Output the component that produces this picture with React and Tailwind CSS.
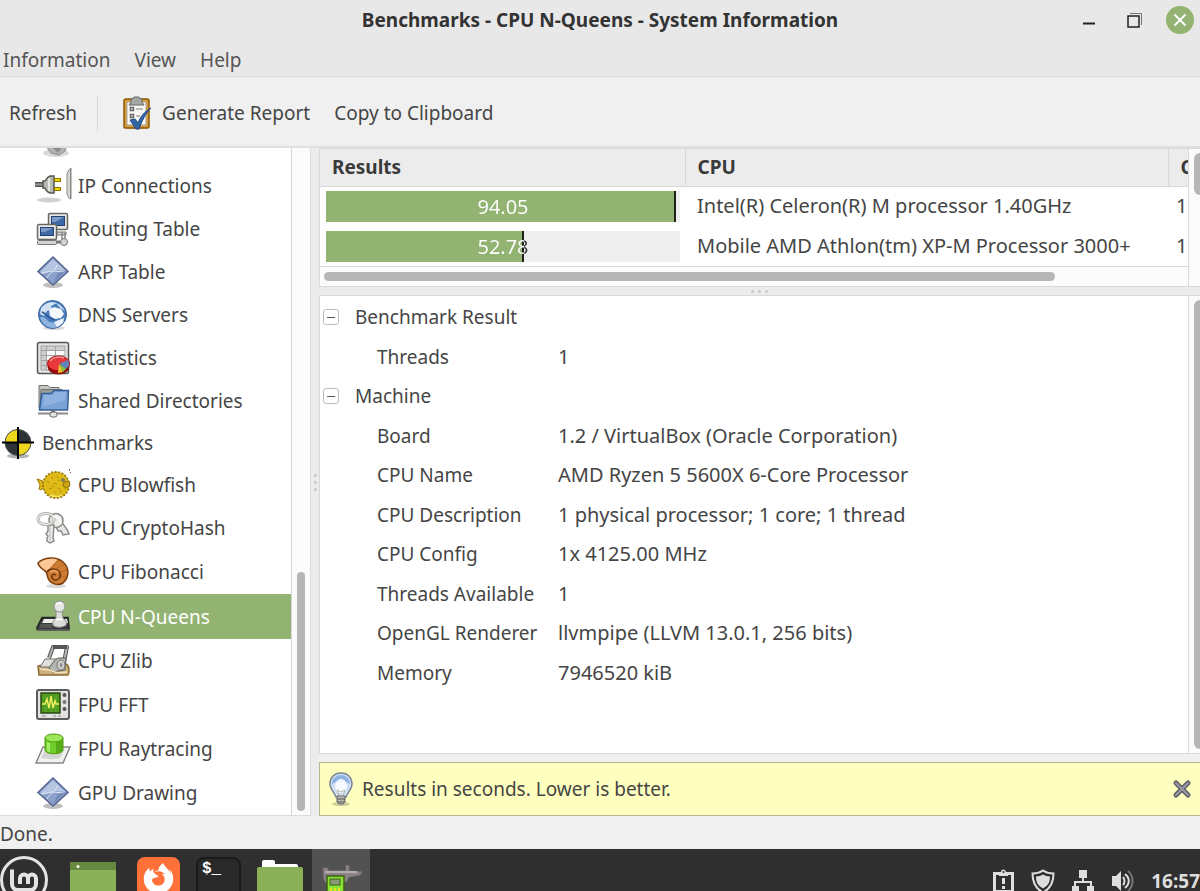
import React from 'react'
import { FaFirefoxBrowser } from 'react-icons/fa'

function Icon({ children, className = 'w-[34px] h-[34px]', viewBox = '0 0 34 34' }) {
  return (
    <svg className={`shrink-0 overflow-visible ${className}`} viewBox={viewBox} fill="none" aria-hidden="true">
      {children}
    </svg>
  )
}

const Globe = () => (
  <Icon>
    <ellipse cx="18" cy="30" rx="11" ry="2" fill="#000" opacity=".15" />
    <circle cx="16.500" cy="16.500" r="14" fill="#4a7bbb" stroke="#3a64a0" />
    <path d="M5 10c3-4 7-6 11-6l5 1-6 3 1 3-5 2-3 5-4-2z" fill="#d3e2f3" />
    <path d="M4 19c5 0 7 2 9 5l7 1 8-3c-2 5-6 8-11 8-6 0-11-4-13-11z" fill="#8fb4de" />
    <path d="M13 12l5-3 7 2 3 5-3 4-6 1-5-3z" fill="#f4f8fc" />
    <path d="M18 24l10-4-1 5-6 4z" fill="#eef4fb" />
    <path d="M20 5c4 1 7 4 9 8l-5-3z" fill="#c3d8ef" />
    <path d="M6 14c5 2 6 7 13 8" stroke="#2c5797" strokeWidth="1.500" />
  </Icon>
)

// Bottom of the row that is scrolled out above the list
const Adapter = () => (
  <Icon>
    <ellipse cx="20" cy="29" rx="13" ry="4" fill="#000" opacity=".15" />
    <path d="M7 18h25l-3 9-6 4-8-2z" fill="#b4b5b2" stroke="#8a8c88" />
    <path d="M15 22h12l-5 7z" fill="#8a8c88" />
  </Icon>
)

const Plug = () => (
  <Icon>
    <ellipse cx="13" cy="31" rx="12" ry="2.500" fill="#000" opacity=".18" />
    <path d="M-1 15.500h12" stroke="#555" strokeWidth="5" />
    <path d="M-1 15.500h12" stroke="#9a9a94" strokeWidth="2" />
    <path d="M18 7v17h-4c-3-1-5-4-5-5h-2v-7h2c1-2 3-4 5-5z" fill="#b9bab4" stroke="#555753" strokeWidth="1.500" />
    <path d="M13 9v13" stroke="#e6e6e2" strokeWidth="2" />
    <rect x="18.500" y="9.500" width="6" height="3" fill="#edd400" stroke="#8a7a00" />
    <rect x="18.500" y="18.500" width="6" height="3" fill="#edd400" stroke="#8a7a00" />
    <path d="M35-1v31l-2-1-2-4V5l2-4z" fill="#d8d8d5" stroke="#888a85" />
    <path d="M34.500 0v29" stroke="#888a85" />
  </Icon>
)

const Network = () => (
  <Icon>
    <rect x="12.500" y="1.500" width="19" height="16" rx="1.500" fill="#e6e6e2" stroke="#666864" strokeWidth="1.500" />
    <rect x="15.500" y="4.500" width="13" height="9" fill="#3e68a8" stroke="#23406f" />
    <path d="M16 5h12l-9 5h-3z" fill="#7c9bc9" />
    <path d="M16 20h14v3H16z" fill="#c9cac6" stroke="#777" />
    <path d="M26 20v8M29 21v8" stroke="#888" strokeWidth="1.500" />
    <rect x="1.500" y="12.500" width="19" height="15" rx="1.500" fill="#eeeeec" stroke="#666864" strokeWidth="1.500" />
    <rect x="4.500" y="15.500" width="13" height="8" fill="#3e68a8" stroke="#23406f" />
    <path d="M5 16h12l-8 4H5z" fill="#7c9bc9" />
    <rect x="1.500" y="28.500" width="19" height="4" rx="1" fill="#d3d4d0" stroke="#777" />
    <path d="M20 30h6" stroke="#777" strokeWidth="3" />
    <circle cx="28" cy="30" r="3.500" fill="#d3d4d0" stroke="#777" />
  </Icon>
)

const Diamond = () => (
  <Icon>
    <ellipse cx="17" cy="30" rx="10" ry="3" fill="#000" opacity=".25" />
    <path d="M17 2l15 14.500L17 30 2 16.500z" fill="#8ba0ca" stroke="#53648f" strokeWidth="1.500" />
    <path d="M17 4l13 12-11-1-13 4-2-2z" fill="#b6c5e2" />
    <path d="M11 23c3-7 8-5 10-13M6 18l10-2 12 1" stroke="#dfe7f5" strokeWidth="1" />
    <path d="M17 28l13-12-8 2-3 6z" fill="#6d83b1" opacity=".7" />
  </Icon>
)

const Stats = () => (
  <Icon>
    <rect x="1.500" y="1.500" width="31" height="31" rx="2" fill="#e4e4e2" stroke="#555" strokeWidth="1.500" />
    <path d="M5 5h24v24H5z" fill="#fafafa" />
    <path d="M5 5h24v4H5zM5 5h5v24H5z" fill="#cfcfcd" />
    <path d="M5 9.500h24M5 14.500h24M5 19.500h24M5 24.500h24M10.500 5v24M19.500 5v24M5 5h24v24H5z" stroke="#a2a2a0" />
    <ellipse cx="22.500" cy="25.500" rx="11" ry="8" fill="#8f1010" />
    <ellipse cx="22.500" cy="22.500" rx="11" ry="7.500" fill="#e9383b" stroke="#a40000" />
    <path d="M23 23l9-4c2 3 1 7-2 9z" fill="#5d86bd" />
    <path d="M23 23l7 5-3 3z" fill="#7dc142" />
    <path d="M23 23l4 8-5 1z" fill="#edc32a" />
    <path d="M14 20c3-4 9-5 14-3" stroke="#f79092" strokeWidth="1.500" />
  </Icon>
)

const SharedFolder = () => (
  <Icon>
    <path d="M3 1.500h9l2 2h9v4H5v18l-2-1z" fill="#c4c5c1" stroke="#70726e" />
    <path d="M5 5.500h21v4H6v15H4z" fill="#9b9d99" stroke="#70726e" />
    <path d="M6 9.500h9l3-3h14.500L31.500 26H3.500z" fill="#7aa3d6" stroke="#37609a" strokeWidth="1.500" />
    <path d="M8 11h9l3-3h10l-1 8-22 7z" fill="#9cbde6" opacity=".6" />
    <path d="M2 29.500h30" stroke="#8a8c88" strokeWidth="2" />
    <path d="M17 26v3" stroke="#70726e" strokeWidth="4" />
    <rect x="14" y="28" width="7" height="5" rx="2" fill="#e4e4e2" stroke="#666" />
  </Icon>
)

const Target = () => (
  <Icon>
    <ellipse cx="18" cy="30" rx="11" ry="2.500" fill="#000" opacity=".3" />
    <circle cx="18" cy="16.500" r="13" fill="#2e3436" />
    <path d="M18 16.500V3.500a13 13 0 0 0-13 13z" fill="#edd71f" />
    <path d="M18 16.500v13a13 13 0 0 0 13-13z" fill="#edd71f" />
    <circle cx="18" cy="16.500" r="13" stroke="#555" />
    <path d="M18 1v32M2 16.500h32" stroke="#000" strokeWidth="2" />
  </Icon>
)

const Blowfish = () => (
  <Icon>
    <path d="M1 11l6 2 2 5-4 4-2-1 1-4z" fill="#e0b71a" stroke="#9a7a08" />
    <circle cx="20" cy="17" r="13" fill="#dcb613" stroke="#9a7a08" strokeWidth="2" strokeDasharray="2 1.500" />
    <circle cx="20" cy="17" r="12" fill="#e0bb18" />
    <path d="M11 13l2 2M15 9l2 2M21 8l1 2M13 21l3-1M18 25l2-2M24 25l1-3M18 15l3 1M16 18l2 1M22 20l2 1M22 13l2-1M28 21l2-1" stroke="#b08f0e" />
    <path d="M28 14l5-1 1 4-3 3-4-2z" fill="#cfa714" stroke="#8a6b05" />
    <circle cx="27" cy="12" r="2" fill="#7a7a5c" />
    <path d="M14 27c5 2 9 2 12 0" stroke="#f3df75" strokeWidth="1.500" />
    <path d="M33.500 1v2M34.500 4v1" stroke="#777" />
  </Icon>
)

const Keys = () => (
  <Icon>
    <path d="M19 13l6-3 7 10 1 3-6 1-2-4-3 0z" fill="#e6e6e4" stroke="#8a8c88" strokeWidth="1.500" />
    <circle cx="20" cy="9.500" r="7" fill="#ededeb" stroke="#8a8c88" strokeWidth="1.500" />
    <path d="M12 14h6l-1 13 1 3-4 2-3-2v-3l1-2-2-2 2-3z" fill="#eeeeec" stroke="#8a8c88" strokeWidth="1.500" />
    <path d="M14 15v15" stroke="#b4b6b2" />
    <ellipse cx="10" cy="8" rx="8" ry="5.500" stroke="#a2a49f" strokeWidth="3" />
    <ellipse cx="10" cy="8" rx="8" ry="5.500" stroke="#e8e8e6" strokeWidth="1.500" />
    <path d="M17 5l6 2 2 6" stroke="#fff" strokeWidth="1.500" />
  </Icon>
)

const Shell = () => (
  <Icon>
    <ellipse cx="20" cy="31" rx="10" ry="2" fill="#000" opacity=".15" />
    <path d="M2 8C8 2 20 1 27 7c7 6 6 16 0 21-5 3-13 1-15-5-1-3-1-5-2-6C8 14 3 13 2 8z" fill="#cf7d35" stroke="#7a3d0f" strokeWidth="1.500" />
    <path d="M3 8C9 3 18 3 22 5c-4 3-9 9-11 11C8 14 4 12 3 8z" fill="#fbc796" />
    <path d="M22 5l-7 9M27 9l-8 6M31 15l-9 3M30 23l-8-3" stroke="#b5682a" />
    <path d="M11 17c3-4 11-4 13 1s-4 9-7 6 0-6 3-4" stroke="#6b340b" strokeWidth="1.500" />
    <path d="M14 17c3-2 7-2 8 1" stroke="#f2ab6c" strokeWidth="1.500" />
  </Icon>
)

const Pawn = () => (
  <Icon>
    <path d="M6 17.500h26l1 10v2H1v-2z" fill="#3a3c3b" stroke="#252626" strokeWidth="1.500" />
    <path d="M8 19h11l-1 4H6z" fill="#eeeeec" />
    <path d="M5 24h12l-1 4H3z" fill="#555756" />
    <path d="M24 19h7l1 4h-7z" fill="#e4e4e2" />
    <path d="M1 29h32v2H1z" fill="#5a5c5b" />
    <path d="M20 11h6l1 7c3 3 4 5 3 7-3 3-11 3-13 0-1-3 1-5 3-7z" fill="#dcdddb" stroke="#8a8c88" />
    <circle cx="23.500" cy="6.500" r="5.500" fill="#e4e5e3" stroke="#8a8c88" />
    <path d="M20 5c1-2 4-3 6-1M20 20c2-1 4-1 6 0" stroke="#fff" strokeWidth="1.500" />
  </Icon>
)

const Clamp = () => (
  <Icon>
    <path d="M2 22c3-2 5 1 9 0s5 1 9 0l10-2c3 1 4 7 2 11H3z" fill="#cdb07c" stroke="#8a6a33" strokeWidth="1.500" />
    <path d="M13 14L17 3h14l-3 15" stroke="#555753" strokeWidth="4" strokeLinejoin="round" />
    <path d="M13 14L17 3h14l-3 15" stroke="#b4b6b2" strokeWidth="2" strokeLinejoin="round" />
    <path d="M17 1h14v4H17z" fill="#555753" />
    <path d="M9 15h14l-6 8H4z" fill="#dededb" stroke="#70726e" />
    <path d="M22 14h8l-1 12-13 2-3-4 5-7z" fill="#b4b6b2" stroke="#5f615d" />
    <ellipse cx="25" cy="21" rx="4" ry="5" fill="#cfd0cc" stroke="#70726e" />
    <ellipse cx="25" cy="21" rx="1.500" ry="2" fill="#8a8c88" />
    <path d="M4 25l9 1 9 3 9-1" stroke="#f1e2bf" strokeWidth="1.500" />
  </Icon>
)

const Scope = () => (
  <Icon>
    <rect x="1" y="2" width="32" height="29" rx="2" fill="#e2e3e0" stroke="#5b5d5a" strokeWidth="2" />
    <rect x="5" y="5" width="19" height="20" fill="#4e9a1c" stroke="#2d4a12" strokeWidth="1.500" />
    <path d="M10 6v18M15 6v18M20 6v18M6 10h17M6 15h17M6 20h17" stroke="#5fa82c" />
    <path d="M6 16h3l2-5 2 9 2-12 2 12 2-7 1 3h3" stroke="#f0f060" strokeWidth="1.500" />
    <circle cx="28.500" cy="7" r="2" fill="#555" />
    <circle cx="28.500" cy="14" r="2" fill="#777" />
    <circle cx="28.500" cy="21" r="2" fill="#555" />
    <path d="M6 28h4M17 28h3M22 28h3" stroke="#aaa" strokeWidth="1.500" />
  </Icon>
)

const Cylinder = () => (
  <Icon>
    <path d="M7 15h27l-7 16H0z" fill="#f2f2f0" stroke="#888a85" strokeWidth="1.500" />
    <path d="M9 17h20l-5 9c-6 2-13 1-19 0z" fill="#d5d6d3" />
    <path d="M9 6v12c1 5 17 5 18 0V6z" fill="#6fd02c" stroke="#4e9a06" />
    <path d="M20 10v11c4 0 6-1 7-3V7z" fill="#53ab17" />
    <path d="M11 10v9l3 1v-9z" fill="#a5ec6b" />
    <ellipse cx="18" cy="6" rx="9" ry="4" fill="#9be65a" stroke="#4e9a06" />
  </Icon>
)

const Clipboard = () => (
  <Icon>
    <ellipse cx="16" cy="32" rx="14" ry="1.500" fill="#000" opacity=".15" />
    <rect x="4" y="3" width="25" height="29" rx="2" fill="#d79a3c" stroke="#8f5902" strokeWidth="1.500" />
    <path d="M7 6h19v23H7z" fill="#f7f7f5" stroke="#a9a9a5" />
    <path d="M11 6V3l3-1V1h5v1l3 1v3l2 3H9z" fill="#a5a7a2" stroke="#666864" />
    <path d="M10.500 11.500h3v3h-3zM10.500 18.500h3v3h-3z" stroke="#666" strokeWidth="1.500" />
    <path d="M16 13h7M16 20h4" stroke="#a9a9a5" strokeWidth="1.500" />
    <path d="M10 24l5-1 3 4c3-7 6-11 13-15-6 6-9 13-12 21h-3z" fill="#3465a4" stroke="#204a87" />
  </Icon>
)

const Bulb = () => (
  <Icon className="w-[26px] h-[34px]" viewBox="0 0 26 34">
    <ellipse cx="13" cy="32" rx="9" ry="2" fill="#000" opacity=".2" />
    <path d="M13 1C6 1 2 6 2 12c0 5 4 8 6 13h10c2-5 6-8 6-13 0-6-4-11-11-11z" fill="#cfe0f4" stroke="#7c8794" strokeWidth="1.500" />
    <path d="M13 3C8 3 4 7 4 12c5-3 13-3 18 0 0-5-4-9-9-9z" fill="#8fb3e3" />
    <ellipse cx="13" cy="14" rx="6" ry="7" fill="#fff" opacity=".85" />
    <path d="M11 24l-2-6 4 2 4-2-2 6" stroke="#b5b5a5" />
    <path d="M9 24h8v6l-2 2h-4l-2-2z" fill="#b9bab0" stroke="#666" />
    <path d="M9 27h8M9 30h8" stroke="#555" />
  </Icon>
)

const MintLogo = () => (
  <Icon className="w-12 h-12" viewBox="0 0 48 48">
    <circle cx="24" cy="24" r="22.500" stroke="#e4e4e4" strokeWidth="3" />
    <path
      d="M12 13.500v14.500a6 6 0 0 0 6 6h12a6 6 0 0 0 6-6v-5.500a4 4 0 0 0-8 0V28M28 28v-5.500a4 4 0 0 0-8 0V28"
      stroke="#e4e4e4"
      strokeWidth="4"
    />
  </Icon>
)

const Caliper = () => (
  <Icon className="w-11 h-11" viewBox="0 0 44 44">
    <path d="M4 9h5v3h18V6l3 1v5l13 1-2 3-11 2-3 5-4-2v-2H9v7l-4-5z" fill="#8d8488" stroke="#7a7175" />
    <path d="M6 12h32v2H6z" fill="#b5acb0" />
    <rect x="8" y="17" width="17" height="25" fill="#8ae234" stroke="#3b5e10" strokeWidth="1.500" />
    <rect x="11" y="20" width="10" height="6" fill="#8a9a78" stroke="#3b5e10" />
    <path d="M12 29v10M16 29v10M20 29v10M10 33h14" stroke="#e8e020" strokeWidth="2" />
  </Icon>
)

const networkItems = [
  { label: 'IP Connections', icon: Plug },
  { label: 'Routing Table', icon: Network },
  { label: 'ARP Table', icon: Diamond },
  { label: 'DNS Servers', icon: Globe },
  { label: 'Statistics', icon: Stats },
  { label: 'Shared Directories', icon: SharedFolder },
]

const benchmarkItems = [
  { label: 'CPU Blowfish', icon: Blowfish, height: 'h-[42px]' },
  { label: 'CPU CryptoHash', icon: Keys, height: 'h-11' },
  { label: 'CPU Fibonacci', icon: Shell, height: 'h-11' },
  { label: 'CPU N-Queens', icon: Pawn, height: 'h-[45px]', selected: true },
  { label: 'CPU Zlib', icon: Clamp, height: 'h-11' },
  { label: 'FPU FFT', icon: Scope, height: 'h-11' },
  { label: 'FPU Raytracing', icon: Cylinder, height: 'h-11' },
  { label: 'GPU Drawing', icon: Diamond, height: 'h-11' },
]

const results = [
  { value: '94.05', pct: 99, cpu: 'Intel(R) Celeron(R) M processor 1.40GHz', config: '1' },
  { value: '52.78', pct: 56, cpu: 'Mobile AMD Athlon(tm) XP-M Processor 3000+', config: '1' },
]

const details = [
  { group: 'Benchmark Result' },
  { name: 'Threads', value: '1' },
  { group: 'Machine' },
  { name: 'Board', value: '1.2 / VirtualBox (Oracle Corporation)' },
  { name: 'CPU Name', value: 'AMD Ryzen 5 5600X 6-Core Processor' },
  { name: 'CPU Description', value: '1 physical processor; 1 core; 1 thread' },
  { name: 'CPU Config', value: '1x 4125.00 MHz' },
  { name: 'Threads Available', value: '1' },
  { name: 'OpenGL Renderer', value: 'llvmpipe (LLVM 13.0.1, 256 bits)' },
  { name: 'Memory', value: '7946520 kiB' },
]

function TreeItem({ label, icon: Glyph, height, selected, nested }) {
  return (
    <li className="shrink-0">
      <button
        className={`flex w-full items-center gap-2 text-left whitespace-nowrap ${height} ${nested ? 'pl-9' : ''} ${
          selected ? 'bg-[#92b372] text-white' : ''
        }`}
      >
        <Glyph />
        {label}
      </button>
    </li>
  )
}

function Sidebar() {
  return (
    <nav className="flex w-[311px] shrink-0 border-r border-b border-[#dcdcdc] bg-white">
      {/* Tree, scrolled to its end */}
      <ul className="flex min-w-0 flex-1 flex-col justify-end overflow-hidden">
        <li className="shrink-0 pb-[6px] pl-9"><Adapter /></li>
        {networkItems.map(item => (
          <TreeItem key={item.label} {...item} height="h-[43px]" nested />
        ))}
        <TreeItem label="Benchmarks" icon={Target} height="h-[42px]" />
        {benchmarkItems.map(item => (
          <TreeItem key={item.label} {...item} nested />
        ))}
      </ul>
      <div className="flex w-[19px] flex-col justify-end border-l border-[#d6d6d6] bg-[#fbfbfb] px-[5px] pb-1">
        <div className="h-[36%] rounded-full bg-[#b6b6b6]" />
      </div>
    </nav>
  )
}

function ResultBar({ value, pct }) {
  return (
    <div className="relative h-[31px] bg-[#efefef]">
      <div className="absolute inset-y-0 left-0 border-r-2 border-[#1d2416] bg-[#92b372]" style={{ width: `${pct}%` }} />
      <div
        className="relative bg-clip-text text-center leading-[31px] text-transparent"
        style={{ backgroundImage: `linear-gradient(90deg, #fff ${pct}%, #3c3c3c ${pct}%)` }}
      >
        {value}
      </div>
    </div>
  )
}

function ResultsPane() {
  return (
    <section className="flex border-y border-l border-[#d9d9d9] bg-white">
      <div className="min-w-0 flex-1">
        <div className="overflow-hidden">
          <table className="w-full min-w-[1000px] table-fixed border-collapse text-left whitespace-nowrap">
            <thead className="h-[37px] border-b border-[#d9d9d9] bg-[#ececec] text-[#3a3a3a]">
              <tr>
                <th className="w-[365px] border-r border-[#d9d9d9] pl-3 font-bold">Results</th>
                <th className="w-[483px] border-r border-[#d9d9d9] pl-3 font-bold">CPU</th>
                <th className="pl-3 font-bold">Config</th>
              </tr>
            </thead>
            <tbody className="text-xl leading-6">
              {results.map(r => (
                <tr key={r.value} className="h-10">
                  <td className="pr-[5px] pl-[6px]"><ResultBar value={r.value} pct={r.pct} /></td>
                  <td className="pl-3">{r.cpu}</td>
                  <td className="pl-2">{r.config}</td>
                </tr>
              ))}
            </tbody>
          </table>
        </div>
        <div className="border-t border-[#d9d9d9] bg-[#fbfbfb] px-1 py-[5px]">
          <div className="h-[9px] w-[85%] rounded-full bg-[#b6b6b6]" />
        </div>
      </div>
      <div className="w-3 shrink-0 border-l border-[#d9d9d9] bg-[#fbfbfb] pt-1 pl-[5px]">
        <div className="h-[42px] rounded-l-full bg-[#b6b6b6]" />
      </div>
    </section>
  )
}

function DetailsPane() {
  return (
    <section className="flex min-h-0 flex-1 border-y border-l border-[#d9d9d9] bg-white">
      <div className="min-w-0 flex-1 overflow-hidden pt-px">
        <table className="w-full table-fixed border-collapse text-left whitespace-nowrap">
          <colgroup>
            <col className="w-[238px]" />
            <col />
          </colgroup>
          <tbody>
            {details.map(row =>
              row.group ? (
                <tr key={row.group} className="odd:h-10 even:h-[39px]">
                  <th colSpan={2} className="p-0 font-normal">
                    <div className="flex items-center gap-4 pl-[3px]">
                      <button
                        aria-label={`Collapse ${row.group}`}
                        className="flex size-4 items-center justify-center rounded-[3px] border border-[#bdbdbd] bg-white"
                      >
                        <span className="h-px w-2 bg-[#555]" />
                      </button>
                      {row.group}
                    </div>
                  </th>
                </tr>
              ) : (
                <tr key={row.name} className="odd:h-10 even:h-[39px]">
                  <th className="p-0 pl-[57px] font-normal">{row.name}</th>
                  <td className="p-0 text-xl leading-6">{row.value}</td>
                </tr>
              )
            )}
          </tbody>
        </table>
      </div>
      <div className="w-3 shrink-0 border-l border-[#d9d9d9] bg-[#fbfbfb] pt-1 pb-1 pl-[5px]">
        <div className="h-full rounded-l-full bg-[#b6b6b6]" />
      </div>
    </section>
  )
}

function Taskbar() {
  return (
    <footer className="flex h-[42px] shrink-0 items-start justify-between overflow-hidden bg-[#2f2f2f]">
      <div className="flex items-start">
        <button aria-label="Menu" className="pt-[7px]"><MintLogo /></button>
        <button aria-label="Show desktop" className="ml-[22px] pt-[13px]">
          <Icon className="w-[46px] h-9" viewBox="0 0 46 36">
            <rect width="46" height="40" rx="1" fill="#8ab158" />
            <path d="M0 0h46v8H0z" fill="#66893f" />
            <circle cx="8" cy="4.500" r="1.500" fill="#fff" />
          </Icon>
        </button>
        <button aria-label="Firefox" className="ml-[21px] pt-2">
          <span className="flex h-11 w-[43px] items-start justify-center rounded-lg bg-[#ff7139] pt-[6px] text-white">
            <FaFirefoxBrowser size={31} />
          </span>
        </button>
        <button aria-label="Terminal" className="ml-4 pt-2">
          <span className="block h-11 w-[45px] rounded-lg border-2 border-[#1a1a1a] bg-[#292929] pl-1 text-left font-['Liberation_Mono'] text-base leading-5 font-bold text-white">
            $_
          </span>
        </button>
        <button aria-label="Files" className="ml-4 pt-[11px]">
          <Icon className="w-[46px] h-10" viewBox="0 0 46 40">
            <path d="M5 9V2q0-2 2-2h9q2 0 2 2v2h21q2 0 2 2v3z" fill="#fff" />
            <rect y="7" width="46" height="40" rx="2" fill="#8ab158" />
          </Icon>
        </button>
        <button aria-label="System Information" className="ml-[9px] flex h-[42px] w-[58px] justify-center bg-[#525252] pt-[10px]">
          <Caliper />
        </button>
      </div>
      <div className="flex items-start gap-4 pt-5 text-[#dedede]">
        <Icon className="w-[23px] h-6" viewBox="0 0 23 24">
          <path d="M7 4.500H2.500v18h18v-18H16" stroke="currentColor" strokeWidth="3" />
          <path d="M7 3h2a2.500 2.500 0 0 1 5 0h2v4H7z" fill="currentColor" />
          <circle cx="11.500" cy="3" r="1" fill="#2f2f2f" />
          <path d="M11.500 9v6M11.500 17v3" stroke="currentColor" strokeWidth="3" />
        </Icon>
        <Icon className="w-6 h-6" viewBox="0 0 24 24">
          <path d="M12 1.500c3 2 6 3 10.500 3 0 9-3 15-10.500 19C4.500 19.500 1.500 13.500 1.500 4.500 6 4.500 9 3.500 12 1.500z" stroke="currentColor" strokeWidth="2" />
          <path d="M12 5.500c2 1 4 2 7 2 0 6-2 9-7 12-5-3-7-6-7-12 3 0 5-1 7-2z" fill="currentColor" />
        </Icon>
        <Icon className="w-6 h-6" viewBox="0 0 24 24">
          <path d="M8 1h8v8H8zM1 17h7v7H1zM16 17h7v7h-7z" fill="currentColor" />
          <path d="M12 9v4M4 17v-4h16v4" stroke="currentColor" strokeWidth="2" />
        </Icon>
        <Icon className="w-6 h-6" viewBox="0 0 24 24">
          <path d="M1 7h4l5-5v20l-5-5H1z" fill="currentColor" />
          <path d="M12 8c2 2 2 6 0 8" stroke="currentColor" strokeWidth="2" />
          <path d="M14 5c5 4 5 10 0 14" stroke="currentColor" strokeWidth="2" />
          <path d="M17 2c6 5 6 15 0 20" stroke="currentColor" strokeWidth="2" opacity=".4" />
        </Icon>
        <time className="leading-6 font-bold">16:57</time>
      </div>
    </footer>
  )
}

export default function App() {
  return (
    <div className="flex h-screen flex-col overflow-hidden bg-[#f0f0f0] font-['Noto_Sans',sans-serif] text-[19px] leading-6 text-[#454545]">
      {/* Title bar */}
      <header className="grid h-10 shrink-0 grid-cols-[1fr_auto_1fr] items-center bg-[#e8e8e8]">
        <h1 className="col-start-2 font-bold text-[#333]">Benchmarks - CPU N-Queens - System Information</h1>
        <div className="flex items-center justify-end gap-6 pr-[6px]">
          <button aria-label="Minimize">
            <Icon className="w-5 h-5" viewBox="0 0 20 20">
              <path d="M5 13.500h12" stroke="#222" strokeWidth="2" />
            </Icon>
          </button>
          <button aria-label="Restore">
            <Icon className="w-5 h-5" viewBox="0 0 20 20">
              <path d="M6 6h11v11H6z" stroke="#222" strokeWidth="1.500" />
              <path d="M8 3.500h11.500V15" stroke="#777" />
            </Icon>
          </button>
          <button aria-label="Close">
            <Icon className="w-7 h-7" viewBox="0 0 28 28">
              <circle cx="14" cy="14" r="14" fill="#92b372" />
              <path d="M8.500 8.500l11 11M19.500 8.500l-11 11" stroke="#fff" strokeWidth="2" />
            </Icon>
          </button>
        </div>
      </header>

      <nav className="flex h-[37px] shrink-0 items-center gap-6 border-b border-[#d9d9d9] bg-[#e8e8e8] px-[3px] pt-[3px] text-[#555]">
        <button>Information</button>
        <button>View</button>
        <button>Help</button>
      </nav>

      {/* Toolbar */}
      <div className="flex h-[71px] shrink-0 items-center border-b-2 border-[#dfdfdf] px-[9px] pt-[2px]">
        <button>Refresh</button>
        <div className="mr-[22px] ml-5 h-9 w-px bg-[#d9d9d9]" />
        <button className="flex items-center gap-2">
          <Clipboard />
          Generate Report
        </button>
        <button className="ml-6">Copy to Clipboard</button>
      </div>

      <main className="flex min-h-0 flex-1">
        <Sidebar />
        <div className="flex w-2 shrink-0 flex-col items-center justify-center gap-1 bg-[#ececec]">
          <span className="size-[3px] rounded-full bg-[#c8c8c8]" />
          <span className="size-[3px] rounded-full bg-[#c8c8c8]" />
          <span className="size-[3px] rounded-full bg-[#c8c8c8]" />
        </div>
        <div className="flex min-w-0 flex-1 flex-col">
          <ResultsPane />
          <div className="flex h-2 shrink-0 items-center justify-center gap-1 bg-[#ececec]">
            <span className="size-[3px] rounded-full bg-[#c8c8c8]" />
            <span className="size-[3px] rounded-full bg-[#c8c8c8]" />
            <span className="size-[3px] rounded-full bg-[#c8c8c8]" />
          </div>
          <DetailsPane />
          <div className="mt-2 flex h-[54px] shrink-0 items-center gap-2 border border-r-0 border-[#b9b68c] bg-[#feffbf] px-2">
            <Bulb />
            <p className="flex-1">Results in seconds. Lower is better.</p>
            <button aria-label="Dismiss">
              <Icon className="w-5 h-5" viewBox="0 0 20 20">
                <path d="M4 4l12 12M16 4L4 16" stroke="#5f5f66" strokeWidth="5" strokeLinecap="round" />
                <path d="M4 4l12 12M16 4L4 16" stroke="#9a9aa6" strokeWidth="2" strokeLinecap="round" />
              </Icon>
            </button>
          </div>
        </div>
      </main>

      <div className="h-[33px] shrink-0 pt-[6px]">Done.</div>
      <Taskbar />
    </div>
  )
}
